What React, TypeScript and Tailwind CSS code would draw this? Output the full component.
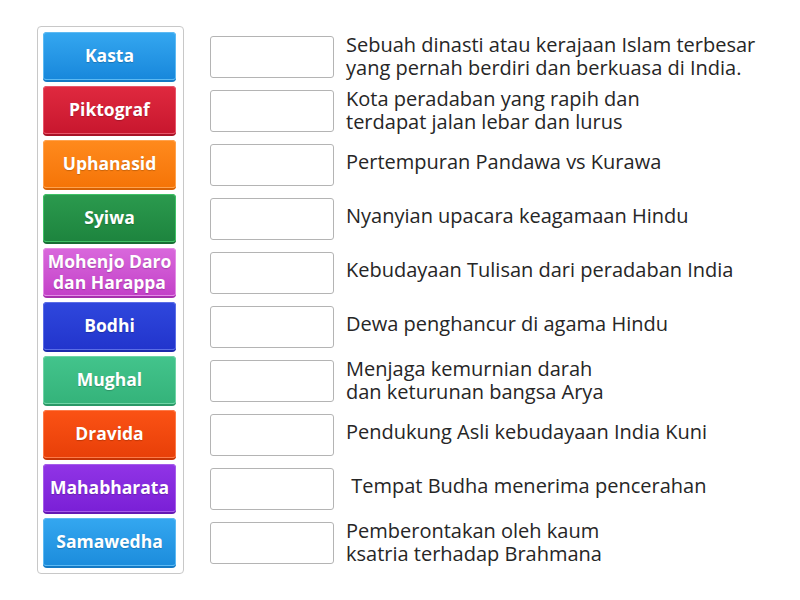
const TILES: { label: string; cls: string }[] = [
  { label: "Kasta", cls: "from-[#34a7f0] to-[#1787db] border-[#1479c4] shadow-[inset_0_0_0_1px_#5dbaf3]" },
  { label: "Piktograf", cls: "from-[#e0293f] to-[#c8162e] border-[#a81226] shadow-[inset_0_0_0_1px_#e8566a]" },
  { label: "Uphanasid", cls: "from-[#ff8a1c] to-[#f57406] border-[#d86203] shadow-[inset_0_0_0_1px_#ffa24d]" },
  { label: "Syiwa", cls: "from-[#2b9a4e] to-[#1d843e] border-[#176e33] shadow-[inset_0_0_0_1px_#3fc266]" },
  { label: "Mohenjo Daro dan Harappa", cls: "from-[#d968dc] to-[#c340c8] border-[#a72fae] shadow-[inset_0_0_0_1px_#e38ce5]" },
  { label: "Bodhi", cls: "from-[#2f47dd] to-[#2234cc] border-[#1b29ab] shadow-[inset_0_0_0_1px_#5b6ee6]" },
  { label: "Mughal", cls: "from-[#43c48c] to-[#34b37a] border-[#2a9866] shadow-[inset_0_0_0_1px_#6fd4a6]" },
  { label: "Dravida", cls: "from-[#fb5214] to-[#e83f08] border-[#c63405] shadow-[inset_0_0_0_1px_#fd7a48]" },
  { label: "Mahabharata", cls: "from-[#9134e6] to-[#7a1fd6] border-[#6518b4] shadow-[inset_0_0_0_1px_#a65de9]" },
  { label: "Samawedha", cls: "from-[#34a7f0] to-[#1b8cdc] border-[#1479c4] shadow-[inset_0_0_0_1px_#5dbaf3]" },
];

const CLUES: string[][] = [
  ["Sebuah dinasti atau kerajaan Islam terbesar", "yang pernah berdiri dan berkuasa di India."],
  ["Kota peradaban yang rapih dan", "terdapat jalan lebar dan lurus"],
  ["Pertempuran Pandawa vs Kurawa"],
  ["Nyanyian upacara keagamaan Hindu"],
  ["Kebudayaan Tulisan dari peradaban India"],
  ["Dewa penghancur di agama Hindu"],
  ["Menjaga kemurnian darah", "dan keturunan bangsa Arya"],
  ["Pendukung Asli kebudayaan India Kuni"],
  [" Tempat Budha menerima pencerahan"],
  ["Pemberontakan oleh kaum", "ksatria terhadap Brahmana"],
];

export default function App() {
  return (
    <div className="w-[800px] h-[600px] bg-white font-['Open_Sans',sans-serif] flex items-start pl-[37px] pt-[26px]">
      {/* tile tray */}
      <div className="w-[147px] border border-[#c8c8c8] rounded-[4px] pl-[5px] pr-[7px] py-[5px] flex flex-col gap-[4px]">
        {TILES.map((t) => (
          <div
            key={t.label}
            className={`h-[50px] w-[133px] rounded-[4px] bg-gradient-to-b border-b-[2px] flex items-center justify-center text-center px-0.5 ${t.cls}`}
          >
            <span className="text-white font-bold text-[17.5px] leading-[21px] -mt-[1px] [text-shadow:0_1px_1px_rgba(0,0,0,0.2)]">
              {t.label}
            </span>
          </div>
        ))}
      </div>

      {/* targets */}
      <div className="ml-[26px] pt-[6px] flex flex-col gap-[4px]">
        {CLUES.map((lines, i) => (
          <div key={i} className="h-[50px] flex items-center">
            <div className="w-[124px] h-[42px] border border-[#b4b4b4] rounded-[3px] bg-white shrink-0" />
            <div
              className={`ml-[12px] text-[20px] leading-[23px] text-[#262626] whitespace-pre ${
                lines.length > 1 ? "-mt-[3px]" : "-mt-[7px]"
              }`}
            >
              {lines.map((l, j) => (
                <div key={j}>{l}</div>
              ))}
            </div>
          </div>
        ))}
      </div>
    </div>
  );
}
